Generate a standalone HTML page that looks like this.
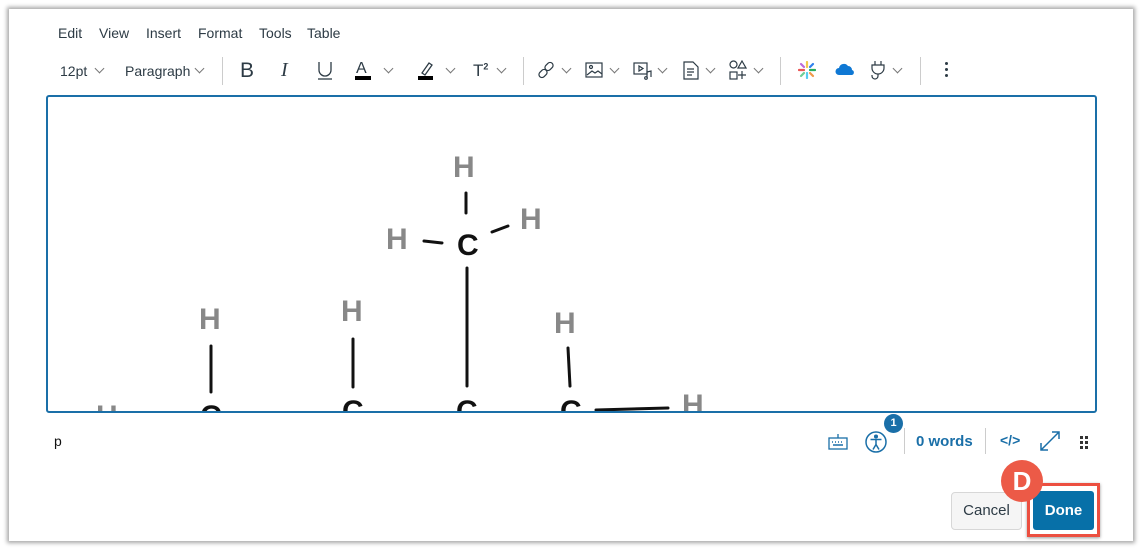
<!DOCTYPE html>
<html><head><meta charset="utf-8"><style>
*{margin:0;padding:0;box-sizing:border-box}
body{width:1143px;height:551px;background:#fff;position:relative;overflow:hidden;font-family:"Liberation Sans",sans-serif;color:#2d3b45}
.frame{position:absolute;left:9px;top:9px;width:1124px;height:532px;background:#fff;box-shadow:0 0 4px 2px rgba(0,0,0,.35)}
.a{position:absolute;white-space:nowrap}
.menu{top:25px;font-size:14px;color:#2d3b45}
.tb{top:61px;font-size:14px;color:#2d3b45}
.chev{position:absolute;width:7px;height:7px;border-right:1px solid #777;border-bottom:1px solid #777;transform:rotate(45deg)}
.sep{position:absolute;width:1px;background:#ccc}
.editor{position:absolute;left:46px;top:95px;width:1051px;height:318px;border:2px solid #1a6fa8;border-radius:3px;overflow:hidden;background:#fff}
.h{position:absolute;font-weight:bold;font-size:30px;color:#888;line-height:1}
.c{position:absolute;font-weight:bold;font-size:30px;color:#111;line-height:1}
</style></head><body>
<div class="frame"></div>
<div class="a menu" style="left:58px">Edit</div>
<div class="a menu" style="left:99px">View</div>
<div class="a menu" style="left:146px">Insert</div>
<div class="a menu" style="left:198px">Format</div>
<div class="a menu" style="left:259px">Tools</div>
<div class="a menu" style="left:307px">Table</div>

<div class="a tb" style="left:60px;top:63px">12pt</div><div class="chev" style="left:96px;top:65px"></div>
<div class="a tb" style="left:125px;top:63px">Paragraph</div><div class="chev" style="left:196px;top:65px"></div>
<div class="sep" style="left:222px;top:57px;height:28px"></div>
<div class="a" style="left:240px;top:59px;font-size:21px;font-weight:normal;color:#2d3b45">B</div>
<div class="a" style="left:281px;top:59px;font-size:20px;font-style:italic;font-family:'Liberation Serif',serif;color:#2d3b45">I</div>
<svg class="a" style="left:316px;top:61px" width="18" height="20"><path d="M3 1v8a6 6 0 0 0 12 0V1" fill="none" stroke="#2d3b45" stroke-width="1.3"/><path d="M2 18h14" stroke="#2d3b45" stroke-width="1.3"/></svg>
<div class="a" style="left:356px;top:60px;font-size:16px;color:#2d3b45">A</div><div class="a" style="left:355px;top:76px;width:16px;height:4px;background:#000"></div><div class="chev" style="left:385px;top:65px"></div>
<svg class="a" style="left:417px;top:60px" width="18" height="22"><path d="M5 13l7-10 3 2-7 10z" fill="none" stroke="#2d3b45" stroke-width="1.3"/><rect x="1" y="16" width="15" height="4" fill="#000"/></svg><div class="chev" style="left:447px;top:65px"></div>
<div class="a" style="left:473px;top:61px;font-size:17px;color:#2d3b45">T<sup style="font-size:9px;font-weight:bold">2</sup></div><div class="chev" style="left:498px;top:65px"></div>
<div class="sep" style="left:523px;top:57px;height:28px"></div>
<svg class="a" style="left:537px;top:61px" width="18" height="18" fill="none" stroke="#2d3b45" stroke-width="1.2"><rect x="9" y="1" width="6" height="9" rx="3" transform="rotate(45 12 5.5)"/><rect x="3" y="8" width="6" height="9" rx="3" transform="rotate(45 6 12.5)"/></svg><div class="chev" style="left:563px;top:65px"></div>
<svg class="a" style="left:585px;top:62px" width="18" height="16" fill="none" stroke="#2d3b45" stroke-width="1.2"><rect x="1" y="1" width="16" height="14"/><circle cx="6" cy="5" r="1.5"/><path d="M2 13l5-4 3 2 3-2 4 3"/></svg><div class="chev" style="left:611px;top:65px"></div>
<svg class="a" style="left:633px;top:62px" width="20" height="18" fill="none" stroke="#2d3b45" stroke-width="1.2"><rect x="1" y="1" width="13" height="11"/><path d="M6 4v5l4-2.5z"/><path d="M14 16v-6l4-1v6"/><circle cx="13" cy="16" r="1.3"/></svg><div class="chev" style="left:659px;top:65px"></div>
<svg class="a" style="left:683px;top:61px" width="16" height="19" fill="none" stroke="#2d3b45" stroke-width="1.2"><path d="M1 1h9l5 5v12H1z"/><path d="M4 8h7M4 11h7M4 14h5"/></svg><div class="chev" style="left:707px;top:65px"></div>
<svg class="a" style="left:729px;top:60px" width="18" height="20" fill="none" stroke="#2d3b45" stroke-width="1.2"><circle cx="4.5" cy="4.5" r="3.5"/><path d="M13 1l4 7h-8z"/><rect x="1" y="12" width="7" height="7"/><path d="M13 11v8M9 15h8"/></svg><div class="chev" style="left:755px;top:65px"></div>
<div class="sep" style="left:780px;top:57px;height:28px"></div>
<svg class="a" style="left:798px;top:61px" width="18" height="18" stroke-width="2.2" stroke-linecap="round"><path d="M9 1v5" stroke="#f2c94c"/><path d="M9 12v5" stroke="#56ccf2"/><path d="M1 9h5" stroke="#eb5757"/><path d="M12 9h5" stroke="#27ae60"/><path d="M3 3l3 3" stroke="#bb6bd9"/><path d="M12 12l3 3" stroke="#f2994a"/><path d="M15 3l-3 3" stroke="#2f80ed"/><path d="M3 15l3-3" stroke="#6fcf97"/></svg>
<svg class="a" style="left:835px;top:63px" width="20" height="13"><path d="M4 12a3.5 3.5 0 0 1 0-7 5 5 0 0 1 9-2 4 4 0 0 1 4 4 2.6 2.6 0 0 1 0 5z" fill="#0f78d4"/></svg>
<svg class="a" style="left:869px;top:60px" width="18" height="22" fill="none" stroke="#2d3b45" stroke-width="1.2"><path d="M6 1v4M12 1v4M3 5h12v3a6 6 0 0 1-12 0z"/><path d="M9 14v2a3 3 0 0 1-6 0v-1"/></svg><div class="chev" style="left:894px;top:65px"></div>
<div class="sep" style="left:920px;top:57px;height:28px"></div>
<div class="a" style="left:945px;top:62px;width:3px;height:3px;background:#2d3b45;border-radius:50%;box-shadow:0 6px 0 #2d3b45,0 12px 0 #2d3b45"></div>

<div class="editor">
<svg style="position:absolute;left:-48px;top:-97px" width="1143" height="551" stroke="#111" stroke-linecap="round">
<path d="M466 193v20" stroke-width="3"/>
<path d="M424 241l18 2" stroke-width="3"/>
<path d="M492 232l16-6" stroke-width="3"/>
<path d="M467 268v118" stroke-width="3"/>
<path d="M211 346v46" stroke-width="3"/>
<path d="M353 339v48" stroke-width="3"/>
<path d="M568 348l2 38" stroke-width="3"/>
<path d="M596 410l72-2" stroke-width="3"/>
</svg>
<div class="h" style="left:405px;top:56px">H</div>
<div class="c" style="left:409px;top:134px">C</div>
<div class="h" style="left:338px;top:128px">H</div>
<div class="h" style="left:472px;top:108px">H</div>
<div class="h" style="left:151px;top:208px">H</div>
<div class="h" style="left:293px;top:200px">H</div>
<div class="h" style="left:506px;top:212px">H</div>
<div class="c" style="left:152px;top:305px">C</div>
<div class="c" style="left:294px;top:300px">C</div>
<div class="c" style="left:408px;top:300px">C</div>
<div class="c" style="left:512px;top:300px">C</div>
<div class="h" style="left:634px;top:294px">H</div>
<div class="h" style="left:48px;top:305px">H</div>
</div>

<div class="a" style="left:54px;top:433px;font-size:14px;color:#111">p</div>
<svg class="a" style="left:828px;top:433px" width="20" height="17" fill="none" stroke="#1a6fa8" stroke-width="1.3"><path d="M10 1v4"/><rect x="1" y="5" width="18" height="11"/><path d="M4 9h1M7 9h1M10 9h1M13 9h1M16 9h0M5 12h10" stroke-width="1.6"/></svg>
<svg class="a" style="left:865px;top:431px" width="22" height="22" fill="none" stroke="#1a6fa8" stroke-width="1.5"><circle cx="11" cy="11" r="10"/><circle cx="11" cy="5.5" r="1.3" fill="#1a6fa8"/><path d="M5.5 8.5h11M11 8.5v5M11 13.5l-3 5M11 13.5l3 5"/></svg>
<div class="a" style="left:884px;top:414px;width:19px;height:19px;border-radius:50%;background:#1a6fa8;color:#fff;font-size:11px;font-weight:bold;text-align:center;line-height:19px">1</div>
<div class="sep" style="left:904px;top:428px;height:26px"></div>
<div class="a" style="left:916px;top:433px;font-size:15px;font-weight:bold;color:#1a6fa8">0 words</div>
<div class="sep" style="left:985px;top:428px;height:26px"></div>
<div class="a" style="left:1000px;top:432px;font-size:14px;font-weight:bold;color:#1a6fa8">&lt;/&gt;</div>
<svg class="a" style="left:1039px;top:430px" width="22" height="22" fill="none" stroke="#1a6fa8" stroke-width="1.5"><path d="M2 20L20 2M13 2h7v7M2 13v7h7"/></svg>
<div class="a" style="left:1080px;top:436px;width:3px;height:3px;background:#333;box-shadow:5px 0 #333,0 5px #333,5px 5px #333,0 10px #333,5px 10px #333"></div>

<div class="a" style="left:951px;top:492px;width:71px;height:38px;background:#f5f5f5;border:1px solid #d7d7d7;border-radius:4px;font-size:15px;color:#2d3b45;text-align:center;line-height:36px">Cancel</div>
<div class="a" style="left:1027px;top:483px;width:73px;height:54px;border:3px solid #ec4f40;box-shadow:0 1px 3px rgba(0,0,0,.4)"></div>
<div class="a" style="left:1033px;top:491px;width:61px;height:39px;background:#0770a8;border-radius:3px;font-size:15px;font-weight:bold;color:#fff;text-align:center;line-height:39px">Done</div>
<div class="a" style="left:1001px;top:460px;width:42px;height:42px;border-radius:50%;background:#ec5a47;color:#fff;font-size:26px;font-weight:bold;text-align:center;line-height:42px">D</div>
</body></html>
